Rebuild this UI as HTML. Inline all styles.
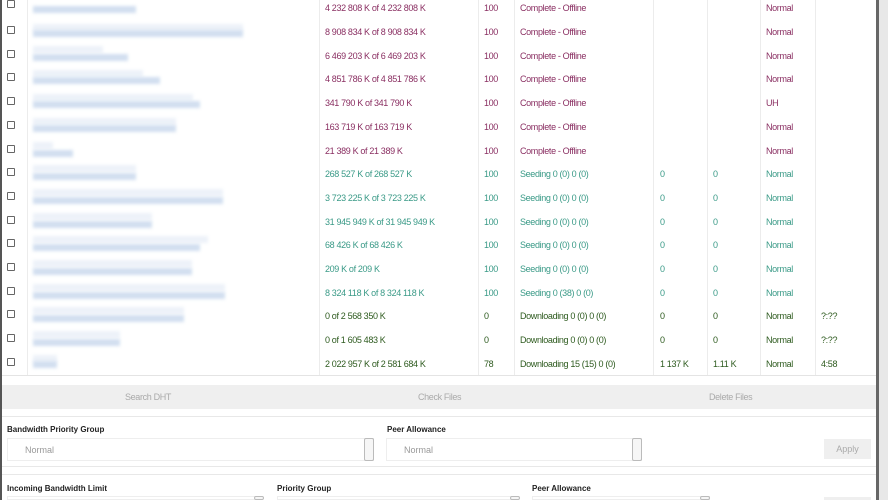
<!DOCTYPE html>
<html><head><meta charset="utf-8"><style>
*{margin:0;padding:0;box-sizing:border-box}
html{width:888px;height:500px;overflow:hidden}
body{width:888px;height:500px;overflow:hidden;background:#fff;font-family:"Liberation Sans",sans-serif;font-size:9px;position:relative}
.a{position:absolute}
.vl{position:absolute;top:0;height:376px;width:1px;background:#ececec}
.hl{position:absolute;left:2px;width:874px;height:1px;background:#f0f0f0}
.cb{position:absolute;left:7px;width:8px;height:8px;border:1px solid #666;background:#fff;border-radius:1px}
.b1{position:absolute;left:33px;height:7px;background:#d2dff0;filter:blur(1.5px)}
.b2{position:absolute;left:33px;height:7px;background:#edf2f9;filter:blur(1.5px)}
.t{position:absolute;white-space:nowrap;letter-spacing:-0.35px}
.p{color:#8a2f62}.g{color:#3a9a87}.d{color:#2d5a1e}
.lab{position:absolute;font-weight:bold;font-size:8px;color:#222}
.sel{position:absolute;height:23px;border:1px solid #eee;background:#fff;color:#999;font-size:9px;padding:6px 0 0 17px}
.knob{position:absolute;width:10px;border:1px solid #bbb;border-radius:2px;background:#f6f6f6}
</style></head><body>
<div class="a" style="left:0;top:0;width:2px;height:500px;background:#555"></div>
<div class="a" style="left:876px;top:0;width:3px;height:500px;background:#666"></div>
<div class="a" style="left:879px;top:0;width:9px;height:500px;background:#e8e8e8"></div>

<div class="vl" style="left:27px"></div><div class="vl" style="left:319px"></div>
<div class="vl" style="left:478px"></div><div class="vl" style="left:514px"></div>
<div class="vl" style="left:653px"></div><div class="vl" style="left:707px"></div>
<div class="vl" style="left:760px"></div><div class="vl" style="left:815px"></div>
<div class="hl" style="top:375px;background:#e4e4e4"></div>

<div class="cb" style="top:0px"></div><div class="b1" style="top:6px;width:103px"></div>
<div class="t p" style="left:325px;top:3px">4 232 808 K of 4 232 808 K</div><div class="t p" style="left:484px;top:3px">100</div><div class="t p" style="left:520px;top:3px">Complete - Offline</div><div class="t p" style="left:766px;top:3px">Normal</div>

<div class="cb" style="top:26px"></div><div class="b2" style="top:24px;width:210px"></div><div class="b1" style="top:30px;width:210px"></div>
<div class="t p" style="left:325px;top:27px">8 908 834 K of 8 908 834 K</div><div class="t p" style="left:484px;top:27px">100</div><div class="t p" style="left:520px;top:27px">Complete - Offline</div><div class="t p" style="left:766px;top:27px">Normal</div>

<div class="cb" style="top:50px"></div><div class="b2" style="top:46px;width:70px"></div><div class="b1" style="top:54px;width:95px"></div>
<div class="t p" style="left:325px;top:51px">6 469 203 K of 6 469 203 K</div><div class="t p" style="left:484px;top:51px">100</div><div class="t p" style="left:520px;top:51px">Complete - Offline</div><div class="t p" style="left:766px;top:51px">Normal</div>

<div class="cb" style="top:73px"></div><div class="b2" style="top:70px;width:110px"></div><div class="b1" style="top:77px;width:127px"></div>
<div class="t p" style="left:325px;top:74px">4 851 786 K of 4 851 786 K</div><div class="t p" style="left:484px;top:74px">100</div><div class="t p" style="left:520px;top:74px">Complete - Offline</div><div class="t p" style="left:766px;top:74px">Normal</div>

<div class="cb" style="top:97px"></div><div class="b2" style="top:94px;width:160px"></div><div class="b1" style="top:101px;width:167px"></div>
<div class="t p" style="left:325px;top:98px">341 790 K of 341 790 K</div><div class="t p" style="left:484px;top:98px">100</div><div class="t p" style="left:520px;top:98px">Complete - Offline</div><div class="t p" style="left:766px;top:98px">UH</div>

<div class="cb" style="top:121px"></div><div class="b2" style="top:118px;width:143px"></div><div class="b1" style="top:125px;width:143px"></div>
<div class="t p" style="left:325px;top:122px">163 719 K of 163 719 K</div><div class="t p" style="left:484px;top:122px">100</div><div class="t p" style="left:520px;top:122px">Complete - Offline</div><div class="t p" style="left:766px;top:122px">Normal</div>

<div class="cb" style="top:145px"></div><div class="b2" style="top:142px;width:20px"></div><div class="b1" style="top:150px;width:40px"></div>
<div class="t p" style="left:325px;top:146px">21 389 K of 21 389 K</div><div class="t p" style="left:484px;top:146px">100</div><div class="t p" style="left:520px;top:146px">Complete - Offline</div><div class="t p" style="left:766px;top:146px">Normal</div>

<div class="cb" style="top:168px"></div><div class="b2" style="top:165px;width:103px"></div><div class="b1" style="top:173px;width:103px"></div>
<div class="t g" style="left:325px;top:169px">268 527 K of 268 527 K</div><div class="t g" style="left:484px;top:169px">100</div><div class="t g" style="left:520px;top:169px">Seeding 0 (0) 0 (0)</div><div class="t g" style="left:660px;top:169px">0</div><div class="t g" style="left:713px;top:169px">0</div><div class="t g" style="left:766px;top:169px">Normal</div>

<div class="cb" style="top:192px"></div><div class="b2" style="top:189px;width:190px"></div><div class="b1" style="top:197px;width:190px"></div>
<div class="t g" style="left:325px;top:193px">3 723 225 K of 3 723 225 K</div><div class="t g" style="left:484px;top:193px">100</div><div class="t g" style="left:520px;top:193px">Seeding 0 (0) 0 (0)</div><div class="t g" style="left:660px;top:193px">0</div><div class="t g" style="left:713px;top:193px">0</div><div class="t g" style="left:766px;top:193px">Normal</div>

<div class="cb" style="top:216px"></div><div class="b2" style="top:213px;width:119px"></div><div class="b1" style="top:221px;width:119px"></div>
<div class="t g" style="left:325px;top:217px">31 945 949 K of 31 945 949 K</div><div class="t g" style="left:484px;top:217px">100</div><div class="t g" style="left:520px;top:217px">Seeding 0 (0) 0 (0)</div><div class="t g" style="left:660px;top:217px">0</div><div class="t g" style="left:713px;top:217px">0</div><div class="t g" style="left:766px;top:217px">Normal</div>

<div class="cb" style="top:239px"></div><div class="b2" style="top:236px;width:175px"></div><div class="b1" style="top:244px;width:167px"></div>
<div class="t g" style="left:325px;top:240px">68 426 K of 68 426 K</div><div class="t g" style="left:484px;top:240px">100</div><div class="t g" style="left:520px;top:240px">Seeding 0 (0) 0 (0)</div><div class="t g" style="left:660px;top:240px">0</div><div class="t g" style="left:713px;top:240px">0</div><div class="t g" style="left:766px;top:240px">Normal</div>

<div class="cb" style="top:263px"></div><div class="b2" style="top:260px;width:159px"></div><div class="b1" style="top:268px;width:159px"></div>
<div class="t g" style="left:325px;top:264px">209 K of 209 K</div><div class="t g" style="left:484px;top:264px">100</div><div class="t g" style="left:520px;top:264px">Seeding 0 (0) 0 (0)</div><div class="t g" style="left:660px;top:264px">0</div><div class="t g" style="left:713px;top:264px">0</div><div class="t g" style="left:766px;top:264px">Normal</div>

<div class="cb" style="top:287px"></div><div class="b2" style="top:284px;width:192px"></div><div class="b1" style="top:292px;width:192px"></div>
<div class="t g" style="left:325px;top:288px">8 324 118 K of 8 324 118 K</div><div class="t g" style="left:484px;top:288px">100</div><div class="t g" style="left:520px;top:288px">Seeding 0 (38) 0 (0)</div><div class="t g" style="left:660px;top:288px">0</div><div class="t g" style="left:713px;top:288px">0</div><div class="t g" style="left:766px;top:288px">Normal</div>

<div class="cb" style="top:310px"></div><div class="b2" style="top:307px;width:151px"></div><div class="b1" style="top:315px;width:151px"></div>
<div class="t d" style="left:325px;top:311px">0 of 2 568 350 K</div><div class="t d" style="left:484px;top:311px">0</div><div class="t d" style="left:520px;top:311px">Downloading 0 (0) 0 (0)</div><div class="t d" style="left:660px;top:311px">0</div><div class="t d" style="left:713px;top:311px">0</div><div class="t d" style="left:766px;top:311px">Normal</div><div class="t d" style="left:821px;top:311px">?:??</div>

<div class="cb" style="top:334px"></div><div class="b2" style="top:331px;width:87px"></div><div class="b1" style="top:339px;width:87px"></div>
<div class="t d" style="left:325px;top:335px">0 of 1 605 483 K</div><div class="t d" style="left:484px;top:335px">0</div><div class="t d" style="left:520px;top:335px">Downloading 0 (0) 0 (0)</div><div class="t d" style="left:660px;top:335px">0</div><div class="t d" style="left:713px;top:335px">0</div><div class="t d" style="left:766px;top:335px">Normal</div><div class="t d" style="left:821px;top:335px">?:??</div>

<div class="cb" style="top:358px"></div><div class="b2" style="top:355px;width:24px"></div><div class="b1" style="top:361px;width:24px"></div>
<div class="t d" style="left:325px;top:359px">2 022 957 K of 2 581 684 K</div><div class="t d" style="left:484px;top:359px">78</div><div class="t d" style="left:520px;top:359px">Downloading 15 (15) 0 (0)</div><div class="t d" style="left:660px;top:359px">1 137 K</div><div class="t d" style="left:713px;top:359px">1.11 K</div><div class="t d" style="left:766px;top:359px">Normal</div><div class="t d" style="left:821px;top:359px">4:58</div>

<div class="a" style="left:2px;top:385px;width:874px;height:24px;background:#efefef"></div>
<div class="t" style="left:125px;top:392px;color:#aaa">Search DHT</div>
<div class="t" style="left:418px;top:392px;color:#aaa">Check Files</div>
<div class="t" style="left:709px;top:392px;color:#aaa">Delete Files</div>
<div class="hl" style="top:416px;background:#e8e8e8"></div>

<div class="lab" style="left:7px;top:425px">Bandwidth Priority Group</div>
<div class="sel" style="left:7px;top:438px;width:367px">Normal</div>
<div class="knob" style="left:364px;top:438px;height:23px"></div>
<div class="lab" style="left:387px;top:425px">Peer Allowance</div>
<div class="sel" style="left:386px;top:438px;width:256px">Normal</div>
<div class="knob" style="left:632px;top:438px;height:23px"></div>
<div class="a" style="left:824px;top:439px;width:47px;height:20px;background:#efefef;color:#aaa;font-size:9px;text-align:center;line-height:20px">Apply</div>
<div class="hl" style="top:466px;background:#e8e8e8"></div>
<div class="hl" style="top:474px;background:#e8e8e8"></div>

<div class="lab" style="left:7px;top:484px">Incoming Bandwidth Limit</div>
<div class="lab" style="left:277px;top:484px">Priority Group</div>
<div class="lab" style="left:532px;top:484px">Peer Allowance</div>
<div class="sel" style="left:7px;top:496px;width:256px;height:4px;padding:0"></div>
<div class="knob" style="left:254px;top:496px;height:4px"></div>
<div class="sel" style="left:277px;top:496px;width:242px;height:4px;padding:0"></div>
<div class="knob" style="left:510px;top:496px;height:4px"></div>
<div class="sel" style="left:532px;top:496px;width:178px;height:4px;padding:0"></div>
<div class="knob" style="left:700px;top:496px;height:4px"></div>
<div class="a" style="left:824px;top:497px;width:47px;height:3px;background:#efefef"></div>
</body></html>
